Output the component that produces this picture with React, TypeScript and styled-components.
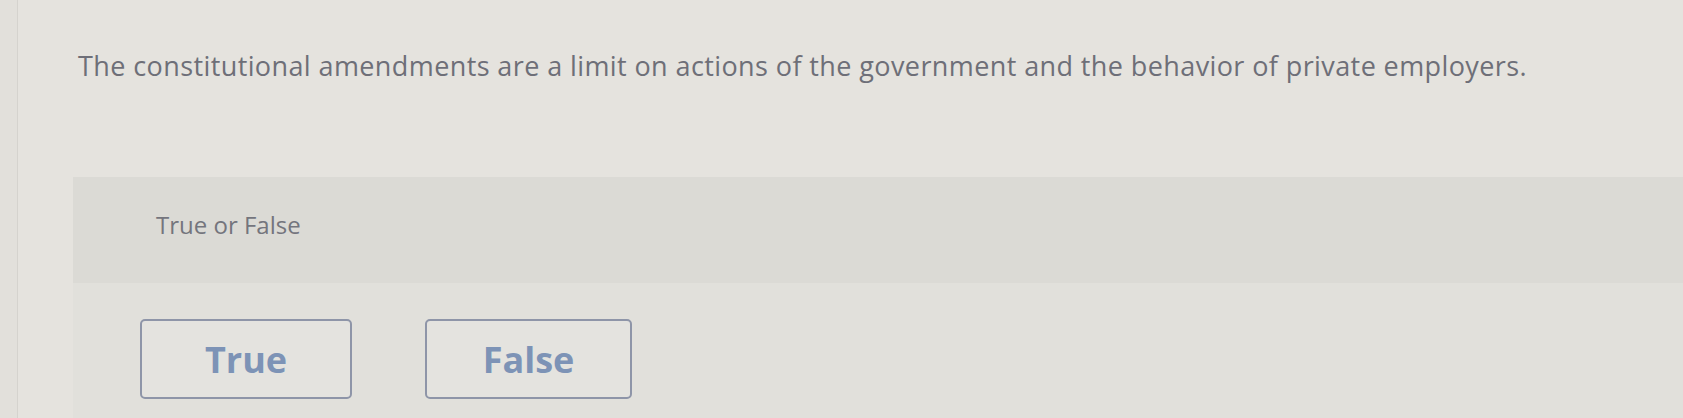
import styled, { createGlobalStyle } from "styled-components";

const GlobalStyle = createGlobalStyle`
  html, body {
    margin: 0;
    padding: 0;
    background: #e5e3de;
  }
`;

const Page = styled.div`
  display: flex;
  width: 1683px;
  height: 418px;
  overflow: hidden;
  background: #e5e3de;
  font-family: "Open Sans", Lato, sans-serif;
`;

const Rail = styled.div`
  width: 17px;
  flex-shrink: 0;
  background: #e2e0db;
  border-right: 1px solid #d5d3ce;
`;

const Main = styled.main`
  flex: 1;
  display: flex;
  flex-direction: column;
  padding-left: 55px;
`;

const Question = styled.p`
  margin: 0;
  padding: 47px 0 0 5px;
  font-size: 27px;
  line-height: 37px;
  letter-spacing: 0.4px;
  color: #6e6f78;
`;

const Panel = styled.section`
  flex: 1;
  margin-top: 93px;
  background: #e1e0db;
  display: flex;
  flex-direction: column;
`;

const PanelHeader = styled.div`
  height: 106px;
  padding: 33px 0 0 83px;
  box-sizing: border-box;
  background: #dbdad5;
`;

const Prompt = styled.span`
  font-size: 24px;
  line-height: 30px;
  color: #74757d;
`;

const Options = styled.div`
  display: flex;
  gap: 73px;
  padding: 36px 0 0 67px;
`;

const OptionButton = styled.button<{ $width: number }>`
  width: ${(p) => p.$width}px;
  height: 80px;
  background: #e4e3df;
  border: 2px solid #8e95a8;
  border-radius: 5px;
  font-family: "Open Sans", Lato, sans-serif;
  font-weight: 700;
  font-size: 36px;
  color: #7d93b6;
  cursor: pointer;
`;

export default function App() {
  return (
    <Page>
      <GlobalStyle />
      <Rail />
      <Main>
        <Question>
          The constitutional amendments are a limit on actions of the government
          and the behavior of private employers.
        </Question>
        <Panel>
          <PanelHeader>
            <Prompt>True or False</Prompt>
          </PanelHeader>
          <Options>
            <OptionButton $width={212}>True</OptionButton>
            <OptionButton $width={207}>False</OptionButton>
          </Options>
        </Panel>
      </Main>
    </Page>
  );
}
